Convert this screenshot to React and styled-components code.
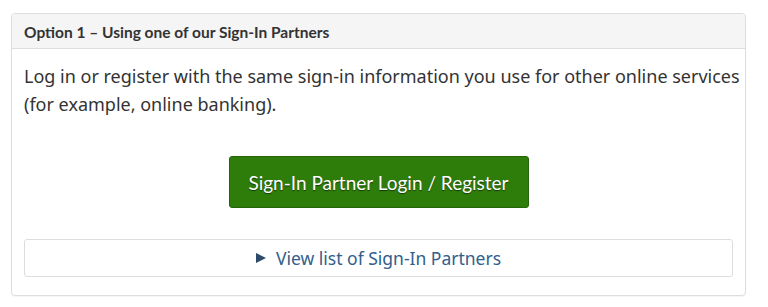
import React from 'react';
import styled, { createGlobalStyle } from 'styled-components';

const GlobalStyle = createGlobalStyle`
  body {
    margin: 0;
    background: #ffffff;
    font-family: 'Noto Sans', 'Open Sans', sans-serif;
  }
`;

const Page = styled.div`
  padding: 13px 22px 11px 11px;
`;

const Panel = styled.section`
  border: 1px solid #dddddd;
  border-radius: 4px;
  background: #ffffff;
  box-shadow: 0 1px 1px rgba(0, 0, 0, 0.04);
`;

const PanelHeader = styled.div`
  height: 33px;
  display: flex;
  align-items: center;
  padding: 1px 12px 0;
  background: #f5f5f5;
  border-bottom: 1px solid #dddddd;
  border-radius: 3px 3px 0 0;
  font-family: Lato, 'Liberation Sans', sans-serif;
  font-weight: 700;
  font-size: 15.5px;
  color: #333333;
`;

const PanelBody = styled.div`
  padding: 13px 12px 18px 12px;
  display: flex;
  flex-direction: column;
`;

const Intro = styled.p`
  margin: 0 -12px 0 0;
  font-family: 'Noto Sans', sans-serif;
  font-size: 18px;
  line-height: 28px;
  color: #333333;
`;

const ButtonRow = styled.div`
  display: flex;
  justify-content: center;
  margin-top: 38px;
  margin-bottom: 31px;
`;

const GreenButton = styled.button`
  width: 300px;
  height: 52px;
  border: 1px solid #24640a;
  border-radius: 3px;
  background: #2e7d0b;
  color: #ffffff;
  font-family: Lato, 'Liberation Sans', sans-serif;
  font-size: 19px;
  text-shadow: 0 1px 1px rgba(0, 0, 0, 0.55);
  cursor: pointer;
`;

const Disclosure = styled.button`
  height: 38px;
  display: flex;
  align-items: center;
  justify-content: center;
  gap: 7px;
  border: 1px solid #dddddd;
  border-radius: 3px;
  background: #ffffff;
  font-family: 'Noto Sans', sans-serif;
  font-size: 17.5px;
  color: #31608c;
  cursor: pointer;
`;

const Arrow = styled.span`
  width: 0;
  height: 0;
  border-top: 5.5px solid transparent;
  border-bottom: 5.5px solid transparent;
  border-left: 10px solid #2d4a6b;
  margin-right: 3px;
`;

export default function App() {
  return (
    <Page>
      <GlobalStyle />
      <Panel>
        <PanelHeader>Option 1 – Using one of our Sign-In Partners</PanelHeader>
        <PanelBody>
          <Intro>
            Log in or register with the same sign-in information you use for other online services
            (for example, online banking).
          </Intro>
          <ButtonRow>
            <GreenButton>Sign-In Partner Login / Register</GreenButton>
          </ButtonRow>
          <Disclosure>
            <Arrow />
            View list of Sign-In Partners
          </Disclosure>
        </PanelBody>
      </Panel>
    </Page>
  );
}
